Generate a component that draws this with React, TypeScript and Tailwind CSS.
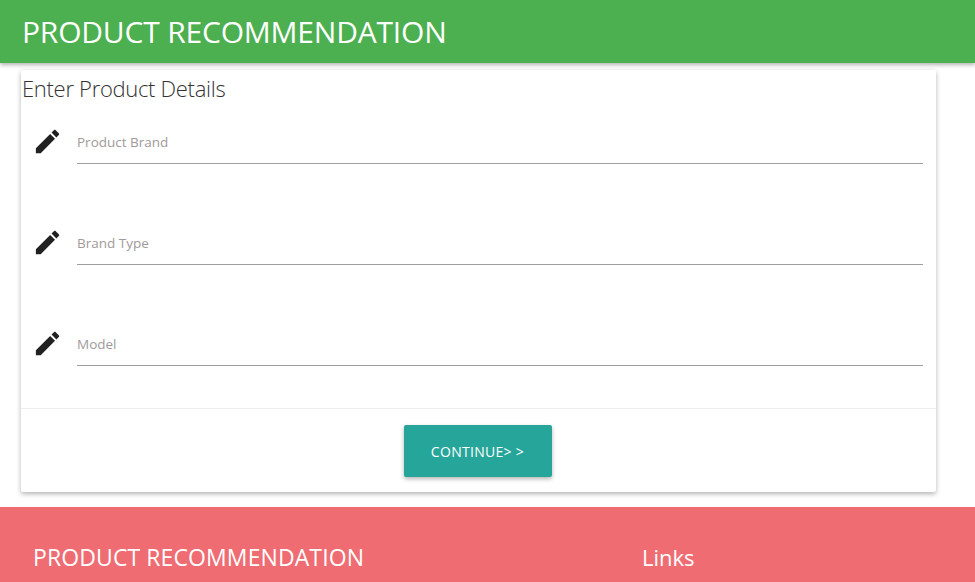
const fields = ["Product Brand", "Brand Type", "Model"];

function PencilIcon() {
  return (
    <svg viewBox="0 0 24 24" className="h-[31px] w-[31px] fill-[#212121]">
      <path d="M3 17.25V21h3.75L17.81 9.94l-3.75-3.75L3 17.25zM20.71 7.04c.39-.39.39-1.02 0-1.41l-2.34-2.34c-.39-.39-1.02-.39-1.41 0l-1.83 1.83 3.75 3.75 1.83-1.83z" />
    </svg>
  );
}

export default function App() {
  return (
    <div className="flex h-[582px] flex-col overflow-hidden bg-white font-['Open_Sans','Noto_Sans',sans-serif]">
      {/* Header */}
      <header className="flex h-[63px] shrink-0 items-center bg-[#4caf50] pl-[22px] shadow-[0_2px_4px_rgba(0,0,0,0.3)]">
        <h1 className="text-[30px] font-normal tracking-[-0.2px] text-white">PRODUCT RECOMMENDATION</h1>
      </header>

      {/* Card */}
      <main className="mx-[21px] mt-[7px] h-[422px] w-[915px] shrink-0 rounded-[2px] bg-white shadow-[0_2px_5px_rgba(0,0,0,0.3)]">
        <h2 className="h-[37px] pl-px text-[22px] leading-[36px] font-light tracking-[-0.3px] text-[#333]">
          Enter Product Details
        </h2>
        <div className="flex h-[301px] flex-col gap-[60px] pt-[16px]">
          {fields.map((label) => (
            <div key={label} className="flex h-[41px] shrink-0">
              <div className="flex w-[56px] shrink-0 items-start pt-[3px] pl-[11px]">
                <PencilIcon />
              </div>
              <input
                placeholder={label}
                className="mr-[13px] h-[41px] min-w-0 flex-1 border-b border-[#9e9e9e] pb-[3px] text-[13.5px] outline-none placeholder:text-[#a09a9a]"
              />
            </div>
          ))}
        </div>
        <div className="flex justify-center border-t border-[#eee] pt-[16px]">
          <button className="ml-[-2px] h-[52px] w-[148px] rounded-[2px] bg-[#26a69a] text-[14px] tracking-[0.3px] text-white shadow-[0_2px_4px_rgba(0,0,0,0.3)]">
            CONTINUE&gt; &gt;
          </button>
        </div>
      </main>

      {/* Footer */}
      <footer className="mt-[15px] flex flex-1 bg-[#ef6c73] pt-[33px] text-white">
        <div className="w-[642px] shrink-0 pl-[33px] text-[23px] leading-[34px] font-normal tracking-[0.1px]">
          PRODUCT RECOMMENDATION
        </div>
        <div className="text-[22px] leading-[34px] font-normal">Links</div>
      </footer>
    </div>
  );
}
